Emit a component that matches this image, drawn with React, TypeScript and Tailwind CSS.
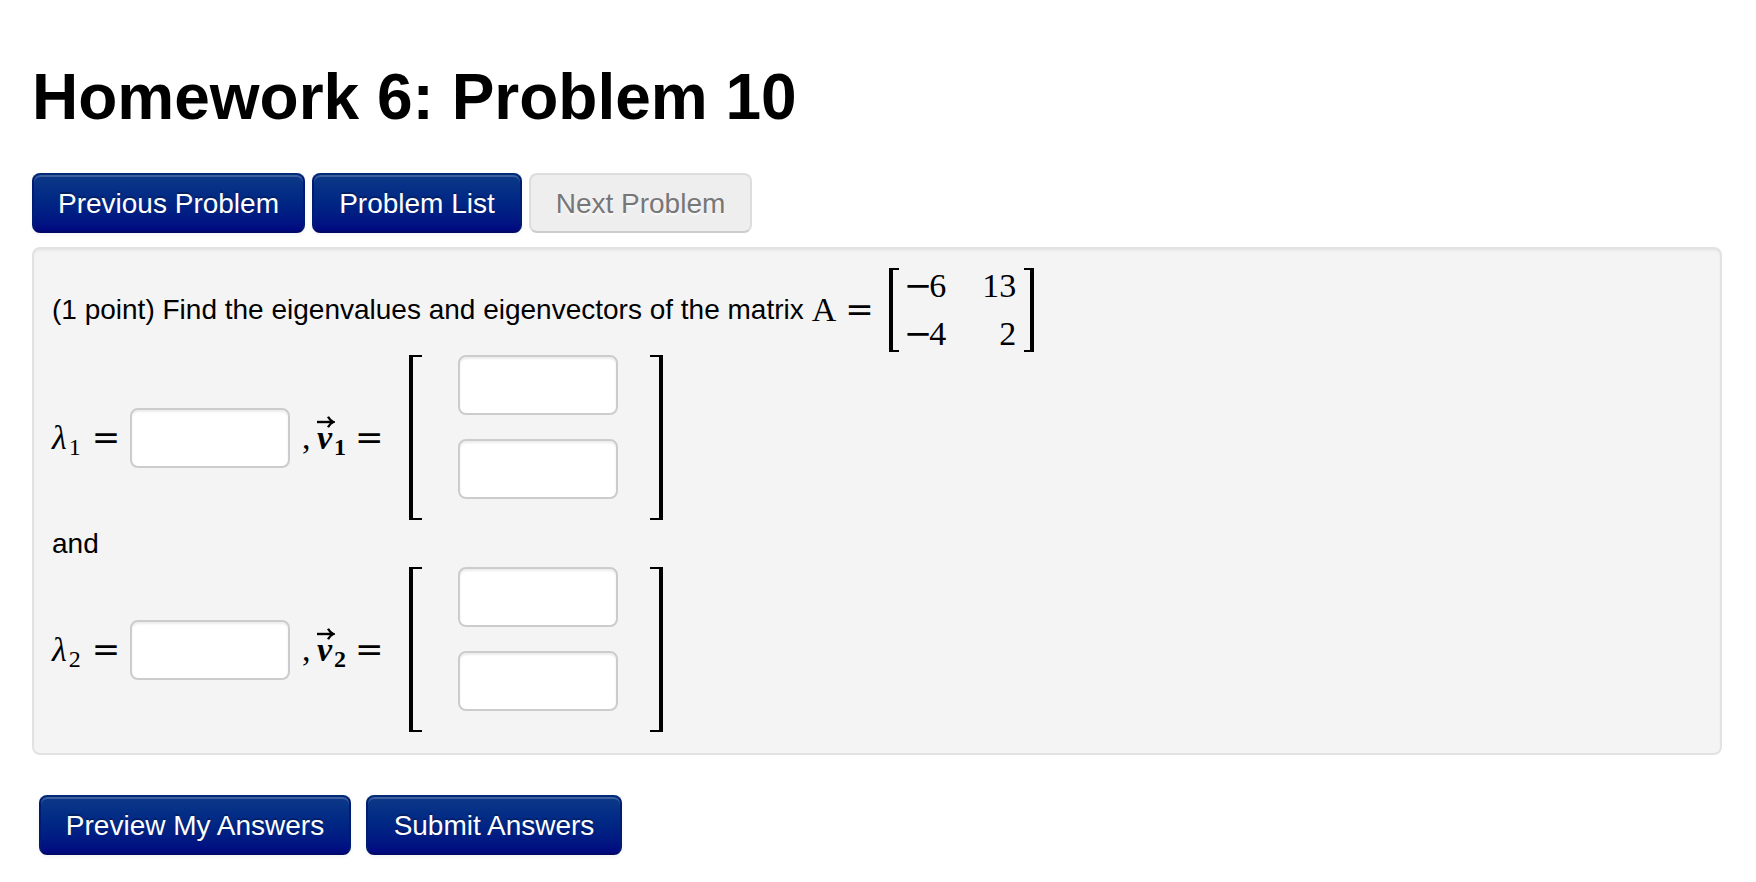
import { useState } from 'react';
import type { ReactNode } from 'react';
import clsx from 'clsx';

const matrix = [
  [-6, 13],
  [-4, 2],
];

const button =
  'h-[60px] pt-0.5 px-6 rounded-lg border-2 text-[28px] leading-10 whitespace-nowrap';

const primary =
  'border-x-[#001c72] border-t-[#002a78] border-b-[#000a66] bg-linear-to-b from-[#0f3a88] to-[#000480] bg-origin-border text-white [text-shadow:0_-2px_0_rgba(0,0,0,0.25)] shadow-[inset_0_2px_0_rgba(255,255,255,0.2),0_2px_4px_rgba(0,0,0,0.05)]';

const textBox =
  'w-40 h-[60px] px-3 rounded-lg border-2 border-[#cccccc] bg-white text-[28px] shadow-[inset_0_2px_2px_rgba(0,0,0,0.075)] outline-none focus:border-[#52a8ec]';

const math = "font-['Liberation_Serif',serif] text-[34px]";

// The serif face has thin, narrow operators, so these come from DejaVu
function Operator({ children }: { children: ReactNode }) {
  return (
    <span className="-mx-[3px] font-['DejaVu_Sans',sans-serif] font-normal leading-none">
      {children}
    </span>
  );
}

function Bracket({ side, small }: { side: 'left' | 'right'; small?: boolean }) {
  return (
    <span
      aria-hidden="true"
      className={clsx(
        'shrink-0 self-stretch border-y-2 border-black',
        side === 'left' ? 'border-l-4' : 'border-r-4',
        small ? 'w-2.5' : 'w-[13px]'
      )}
    />
  );
}

function VectorSymbol({ index }: { index: number }) {
  return (
    <span className="relative font-bold">
      <svg
        viewBox="0 0 18 12"
        aria-hidden="true"
        className="absolute left-0 -top-[3px] w-[18px] h-3"
        fill="none"
        stroke="currentColor"
        strokeWidth="2.4"
      >
        <path d="M0 6H16" />
        <path d="M11 0.8C12.2 3 13.8 5 16.4 6C13.8 7 12.2 9 11 11.2" />
      </svg>
      <i>v</i>
      <sub className="ml-0.5 text-[24px]">{index}</sub>
    </span>
  );
}

function EigenPair({ index }: { index: number }) {
  const [value, setValue] = useState('');
  const [entries, setEntries] = useState(['', '']);

  return (
    <div className="flex items-center h-[165px]">
      <label
        htmlFor={`lambda-${index}`}
        className={clsx(math, 'flex items-baseline gap-3.5 w-[78px] leading-10')}
      >
        <span>
          <i>λ</i>
          <sub className="ml-0.5 text-[24px]">{index}</sub>
        </span>
        <Operator>=</Operator>
      </label>
      <input
        id={`lambda-${index}`}
        type="text"
        value={value}
        onChange={(e) => setValue(e.target.value)}
        className={textBox}
      />
      <div className={clsx(math, 'flex items-baseline w-[119px] pl-3 leading-10')}>
        <span className="w-[15px]">,</span>
        <span className="w-[41px]">
          <VectorSymbol index={index} />
        </span>
        <Operator>=</Operator>
      </div>
      <Bracket side="left" />
      <div className="self-start flex flex-col gap-6 pl-9 pr-8">
        {entries.map((entry, i) => (
          <input
            key={i}
            type="text"
            aria-label={`Vector ${index}, entry ${i + 1}`}
            value={entry}
            onChange={(e) =>
              setEntries(entries.map((old, j) => (j === i ? e.target.value : old)))
            }
            className={textBox}
          />
        ))}
      </div>
      <Bracket side="right" />
    </div>
  );
}

export default function App() {
  return (
    <main className="min-h-screen bg-white pt-[57px] pb-7 pl-8 pr-[34px] font-['Liberation_Sans',Arial,sans-serif] text-[28px] leading-10 text-black">
      <h1 className="text-[64px] leading-[80px] font-bold">Homework 6: Problem 10</h1>

      <nav className="flex flex-wrap gap-[7px] mt-9">
        <button type="button" className={clsx(button, primary)}>Previous Problem</button>
        <button type="button" className={clsx(button, primary, 'min-w-[210px]')}>Problem List</button>
        <button
          type="button"
          disabled
          className={clsx(
            button,
            'min-w-[223px] border-[#dddddd] border-b-[#cccccc] bg-[#eeeeee] text-[#777777] [text-shadow:0_2px_2px_rgba(255,255,255,0.75)]'
          )}
        >
          Next Problem
        </button>
      </nav>

      <form onSubmit={(e) => e.preventDefault()}>
        <section className="flex flex-col gap-[3px] mt-3.5 pt-[19px] pb-[21px] px-[18px] rounded-lg border-2 border-[#e2e2e2] bg-[#f4f4f4] shadow-[inset_0_2px_2px_rgba(0,0,0,0.05)]">
          <div className="flex items-center">
            <p>(1 point) Find the eigenvalues and eigenvectors of the matrix</p>
            <span className={clsx(math, 'flex items-baseline gap-3 ml-2 mr-[18px]')}>
              A <Operator>=</Operator>
            </span>
            <Bracket side="left" small />
            <table className={clsx(math, '-my-1.5 mx-2 leading-[48px] text-right')}>
              <tbody>
                {matrix.map(([a, b], i) => (
                  <tr key={i}>
                    <td className="p-0">
                      {a < 0 && <Operator>−</Operator>}
                      {Math.abs(a)}
                    </td>
                    <td className="p-0 pl-9">{b}</td>
                  </tr>
                ))}
              </tbody>
            </table>
            <Bracket side="right" small />
          </div>

          <EigenPair index={1} />
          <p className="leading-[41px]">and</p>
          <EigenPair index={2} />
        </section>

        <div className="flex flex-wrap gap-[15px] mt-10 pl-[7px]">
          <button type="button" className={clsx(button, primary, 'min-w-[312px]')}>Preview My Answers</button>
          <button type="submit" className={clsx(button, primary, 'min-w-[256px]')}>Submit Answers</button>
        </div>
      </form>
    </main>
  );
}
